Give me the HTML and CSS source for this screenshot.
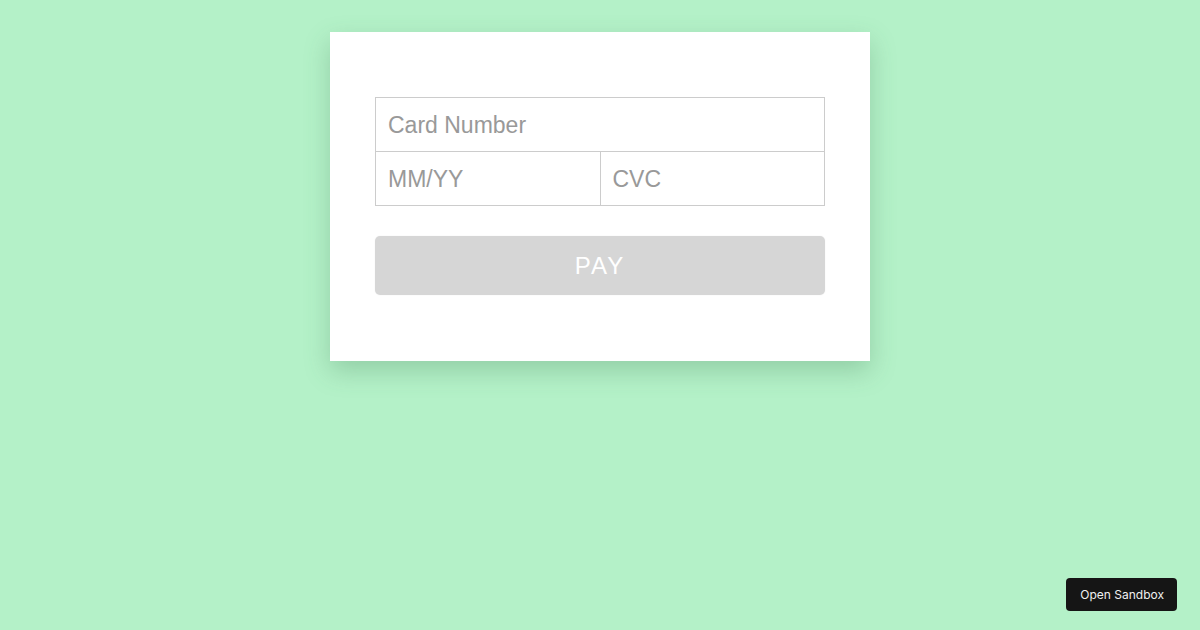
FILE: index.html
```html
<!DOCTYPE html>
<html>
<head>
  <meta charset="UTF-8">
  <title>Checkout</title>
  <link rel="stylesheet" href="styles.css">
</head>
<body>
  <div class="card">
    <form class="pay-form">
      <div class="fields">
        <input type="text" class="field field-full" placeholder="Card Number">
        <div class="field-row">
          <input type="text" class="field" placeholder="MM/YY">
          <input type="text" class="field field-right" placeholder="CVC">
        </div>
      </div>
      <button type="submit" class="pay-btn" disabled>PAY</button>
    </form>
  </div>

  <a class="sandbox-btn" href="#">Open Sandbox</a>
</body>
</html>
```

FILE: styles.css
```css
body {
  margin: 0;
  height: 630px;
  background-color: #b4f1c8;
  font-family: "Liberation Sans", Arial, sans-serif;
  overflow: hidden;
}

.card {
  width: 450px;
  margin: 32px auto 0;
  padding: 65px 45px 66px;
  background-color: #fff;
  box-shadow: 0 10px 24px rgba(60, 120, 80, 0.28);
}

.fields {
  border: 1px solid #ccc;
}

.field-row {
  display: flex;
}

.field {
  display: block;
  width: 100%;
  height: 54px;
  box-sizing: border-box;
  border: none;
  padding: 2px 12px 0;
  font-family: "Liberation Sans", Arial, sans-serif;
  font-size: 23px;
  color: #333;
  background: #fff;
  outline: none;
}

.field-full {
  border-bottom: 1px solid #ccc;
}

.field-row .field {
  flex: 1;
  width: 50%;
  height: 53px;
}

.field-right {
  border-left: 1px solid #ccc;
}

.field::placeholder {
  color: #999;
  opacity: 1;
}

.pay-btn {
  display: block;
  width: 100%;
  height: 59px;
  margin-top: 30px;
  border: none;
  border-radius: 5px;
  background-color: #d6d6d6;
  color: #fff;
  font-family: "Liberation Sans", Arial, sans-serif;
  font-size: 24px;
  letter-spacing: 2px;
  box-shadow: 0 0 2px rgba(0, 0, 0, 0.06);
}

.sandbox-btn {
  position: fixed;
  right: 23px;
  bottom: 19px;
  padding: 0 13px 0 14px;
  height: 33px;
  line-height: 33px;
  border-radius: 4px;
  background-color: #151515;
  color: #f0f0f0;
  font-family: Inter, "Liberation Sans", sans-serif;
  font-size: 12px;
  text-decoration: none;
}
```
